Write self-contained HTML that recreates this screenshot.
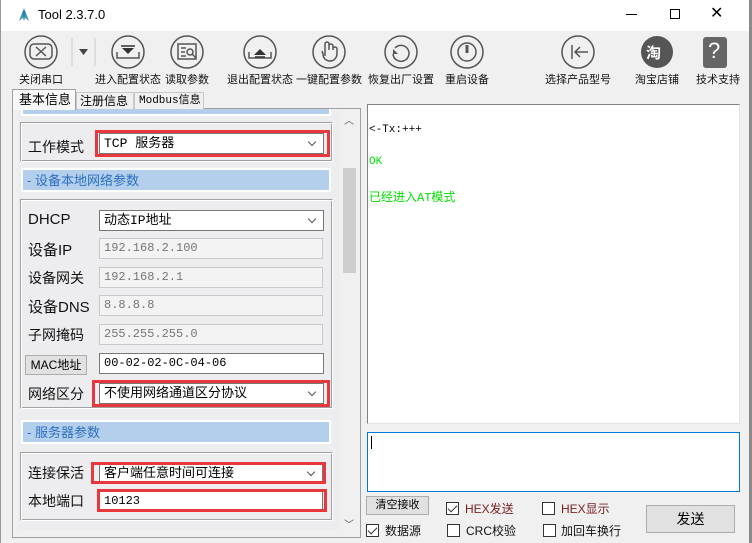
<!DOCTYPE html>
<html><head><meta charset="utf-8">
<style>
*{box-sizing:border-box;margin:0;padding:0}
body{width:752px;height:543px;overflow:hidden;background:#f0f0f0;font-family:"Liberation Sans","Noto Sans CJK SC",sans-serif;font-size:12px;color:#000;position:relative}
.a{position:absolute}
.tb{left:0;top:0;width:752px;height:31px;background:#fff}
.lbl{position:absolute;font-size:11px;white-space:nowrap;transform:translateX(-50%);top:71px;color:#111}
.grp{position:absolute;border:1px solid #a0a0a0;border-right-color:#fff;border-bottom-color:#fff;box-shadow:inset 1px 1px 0 #fff, inset -1px -1px 0 #a0a0a0}
.hdr{position:absolute;left:21px;width:310px;height:24px;background:#b4cfec;color:#2a6fc0;font-size:13px;line-height:21px;padding-left:4px;border:2px solid #fff}
.fl{position:absolute;left:28px;font-size:14px;color:#111}
.in{position:absolute;left:99px;width:224px;height:21px;border:1px solid #c9c9c9;background:#f3f3f3;color:#777;font-family:"Liberation Mono","Noto Sans CJK SC",monospace;font-size:12px;line-height:19px;padding-left:4px}
.sel{position:absolute;background:#fff;border:1px solid #777;font-size:13px;line-height:19px;padding-left:4px;font-family:"Liberation Mono","Noto Sans CJK SC",monospace}
.sel:after{content:"";position:absolute;right:8px;top:5px;width:5px;height:5px;border-right:1px solid #555;border-bottom:1px solid #555;transform:rotate(45deg)}
.red{position:absolute;border:3px solid #e8383c}
.cb{position:absolute;width:13px;height:13px;border:1px solid #333;background:#fff}
.ck:after{content:"";position:absolute;left:3px;top:0px;width:4px;height:8px;border-right:1px solid #333;border-bottom:1px solid #333;transform:rotate(45deg)}
.ct{position:absolute;font-size:12px;color:#111}
.tab{position:absolute;z-index:5}
</style></head><body>
<div class="a tb"></div>
<div class="a" style="left:749px;top:0;width:3px;height:543px;background:#8a8a8a"></div>
<div class="a" style="left:0;top:0;width:1px;height:543px;background:#9a9a9a"></div>
<svg class="a" style="left:17px;top:8px" width="14" height="14" viewBox="0 0 14 14"><path d="M7 0 L12 13 L7 9 L2 13 Z" fill="#3a9bb5"/><path d="M7 2 L7 12" stroke="#1d6a85" stroke-width="1"/></svg>
<div class="a" style="left:38px;top:7px;font-size:13px">Tool 2.3.7.0</div>
<div class="a" style="left:626px;top:14px;width:11px;height:1px;background:#000"></div>
<div class="a" style="left:670px;top:9px;width:10px;height:10px;border:1px solid #000"></div>
<div class="a" style="left:710px;top:3px;font-size:16px">✕</div>

<svg class="a" style="left:0;top:30px" width="752" height="44" viewBox="0 30 752 44">
<g fill="none" stroke="#555" stroke-width="1.5">
<circle cx="41" cy="52" r="16"/><rect x="30" y="44" width="22" height="15" rx="4"/><path d="M36 47l10 9M46 47l-10 9"/>
<circle cx="128" cy="52" r="16"/><path d="M117 52v6h22v-6"/>
<circle cx="187" cy="52" r="16"/><rect x="178" y="44" width="18" height="15"/><path d="M181 48h5M181 52h4M181 56h5"/><circle cx="190" cy="52" r="3"/><path d="M192 54l4 4"/>
<circle cx="260" cy="52" r="16"/><path d="M249 52v6h22v-6"/>
<circle cx="329" cy="52" r="16"/><path d="M325 56v-12a2 2 0 0 1 4 0v6M329 48v-2a2 2 0 0 1 4 0v4M333 49a2 2 0 0 1 4 0v4c0 5-3 8-7 8s-7-3-7-7l-1-3"/>
<circle cx="401" cy="52" r="16"/><path d="M395 48a8 8 0 1 1-2 6"/>
<circle cx="467" cy="52" r="16"/><circle cx="467" cy="52" r="9"/>
<circle cx="578" cy="52" r="16"/><path d="M572 45v14M588 52h-13M580 47l-5 5 5 5"/>
</g>
<path d="M79 49h9l-4.5 6z" fill="#444"/>
<path d="M122 48h12l-6 6z" fill="#333"/><path d="M121 46h14" stroke="#333" stroke-width="1.5"/>
<path d="M254 55h12l-6-6z" fill="#333"/><path d="M255 57h10" stroke="#333" stroke-width="1.5"/>
<path d="M393 49l0 5 5 0z" fill="#555"/>
<path d="M467 45v8" stroke="#555" stroke-width="3"/>
<circle cx="657" cy="52" r="16" fill="#555"/>
<rect x="703" y="37" width="24" height="31" rx="3" fill="#666"/>
<line x1="95" y1="38" x2="95" y2="66" stroke="#ccc"/><line x1="72" y1="38" x2="72" y2="66" stroke="#ccc"/>
</svg>
<div class="a" style="left:646px;top:42px;color:#fff;font-size:15px;font-weight:bold">淘</div>
<div class="a" style="left:708px;top:38px;color:#fff;font-size:22px">?</div>
<div class="lbl" style="left:41px">关闭串口</div>
<div class="lbl" style="left:128px">进入配置状态</div>
<div class="lbl" style="left:187px">读取参数</div>
<div class="lbl" style="left:260px">退出配置状态</div>
<div class="lbl" style="left:329px">一键配置参数</div>
<div class="lbl" style="left:401px">恢复出厂设置</div>
<div class="lbl" style="left:467px">重启设备</div>
<div class="lbl" style="left:578px">选择产品型号</div>
<div class="lbl" style="left:657px">淘宝店铺</div>
<div class="lbl" style="left:718px">技术支持</div>

<div class="a" style="left:12px;top:108px;width:349px;height:430px;border:1px solid #a0a0a0;background:#f0f0f0"></div>
<div class="tab" style="left:12px;top:89px;width:64px;height:21px;background:#f8f8f8;border:1px solid #a0a0a0;border-bottom:none;font-size:13px;line-height:19px;padding-left:6px">基本信息</div>
<div class="tab" style="left:76px;top:92px;width:58px;height:17px;background:#f0f0f0;border:1px solid #c8c8c8;border-bottom:none;font-size:12px;line-height:16px;padding-left:3px">注册信息</div>
<div class="tab" style="left:134px;top:92px;width:70px;height:17px;background:#f0f0f0;border:1px solid #c8c8c8;border-bottom:none;font-family:'Liberation Mono','Noto Sans CJK SC',monospace;font-size:11px;line-height:16px;padding-left:4px">Modbus信息</div>

<div class="a" style="left:18px;top:110px;width:322px;height:420px;background:#ededf0"></div>
<div class="a" style="left:21px;top:109px;width:310px;height:7px;background:#b4cfec;border:2px solid #fff;border-top:none"></div>
<div class="a" style="left:341px;top:110px;width:17px;height:422px;background:#f0f0f0"></div>
<div class="a" style="left:343px;top:168px;width:13px;height:105px;background:#cdcdcd"></div>
<div class="a" style="left:344px;top:112px;font-size:10px;color:#555">︿</div>
<div class="a" style="left:344px;top:516px;font-size:10px;color:#555">﹀</div>

<div class="grp" style="left:20px;top:122px;width:313px;height:40px"></div>
<div class="fl" style="top:137px">工作模式</div>
<div class="sel" style="left:99px;top:133px;width:225px;height:21px">TCP 服务器</div>
<div class="red" style="left:95px;top:130px;width:235px;height:27px"></div>

<div class="hdr" style="top:168px">- 设备本地网络参数</div>
<div class="grp" style="left:20px;top:199px;width:313px;height:210px"></div>
<div class="fl" style="top:211px;font-size:15px">DHCP</div>
<div class="sel" style="left:99px;top:210px;width:225px;height:21px">动态IP地址</div>
<div class="fl" style="top:239px;font-size:15px">设备IP</div>
<div class="in" style="top:238px">192.168.2.100</div>
<div class="fl" style="top:268px">设备网关</div>
<div class="in" style="top:267px">192.168.2.1</div>
<div class="fl" style="top:296px;font-size:15px">设备DNS</div>
<div class="in" style="top:295px">8.8.8.8</div>
<div class="fl" style="top:325px">子网掩码</div>
<div class="in" style="top:324px">255.255.255.0</div>
<div class="a" style="left:25px;top:355px;width:62px;height:20px;background:#e1e1e1;border:1px solid #adadad;font-size:12px;line-height:18px;text-align:center">MAC地址</div>
<div class="in" style="top:353px;background:#fff;border-color:#7a7a7a;color:#000;width:225px">00-02-02-0C-04-06</div>
<div class="fl" style="top:384px">网络区分</div>
<div class="sel" style="left:99px;top:383px;width:225px;height:21px">不使用网络通道区分协议</div>
<div class="red" style="left:92px;top:380px;width:238px;height:27px"></div>

<div class="hdr" style="top:420px">- 服务器参数</div>
<div class="grp" style="left:20px;top:452px;width:313px;height:69px"></div>
<div class="fl" style="top:463px">连接保活</div>
<div class="sel" style="left:99px;top:463px;width:224px;height:20px">客户端任意时间可连接</div>
<div class="red" style="left:91px;top:462px;width:235px;height:22px"></div>
<div class="fl" style="top:491px">本地端口</div>
<div class="in" style="top:491px;background:#fff;color:#000;border-color:#777;width:224px">10123</div>
<div class="red" style="left:97px;top:489px;width:230px;height:23px"></div>

<div class="a" style="left:367px;top:104px;width:373px;height:320px;background:#fff;border:1px solid #828282;border-right-color:#e3e3e3;border-bottom-color:#e3e3e3"></div>
<div class="a" style="left:369px;top:124px;font-family:'Liberation Mono','Noto Sans CJK SC',monospace;font-size:11px">&lt;-Tx:+++</div>
<div class="a" style="left:369px;top:156px;font-family:'Liberation Mono','Noto Sans CJK SC',monospace;font-size:11px;color:#00e000">OK</div>
<div class="a" style="left:369px;top:188px;font-family:'Liberation Mono','Noto Sans CJK SC',monospace;font-size:12px;color:#00e000">已经进入AT模式</div>
<div class="a" style="left:367px;top:432px;width:373px;height:60px;background:#fff;border:1px solid #0078d7"></div>
<div class="a" style="left:371px;top:436px;width:1px;height:13px;background:#000"></div>
<div class="a" style="left:366px;top:496px;width:63px;height:19px;background:#e1e1e1;border:1px solid #adadad;font-size:11px;line-height:17px;text-align:center">清空接收</div>
<div class="cb ck" style="left:446px;top:502px"></div><div class="ct" style="left:465px;top:500px;color:#7a1f1f">HEX发送</div>
<div class="cb" style="left:542px;top:502px"></div><div class="ct" style="left:561px;top:500px;color:#7a1f1f">HEX显示</div>
<div class="cb ck" style="left:366px;top:524px"></div><div class="ct" style="left:385px;top:522px">数据源</div>
<div class="cb" style="left:447px;top:524px"></div><div class="ct" style="left:466px;top:522px">CRC校验</div>
<div class="cb" style="left:543px;top:524px"></div><div class="ct" style="left:561px;top:522px">加回车换行</div>
<div class="a" style="left:646px;top:505px;width:89px;height:28px;background:#e1e1e1;border:1px solid #adadad;font-size:14px;line-height:26px;text-align:center">发送</div>
</body></html>
